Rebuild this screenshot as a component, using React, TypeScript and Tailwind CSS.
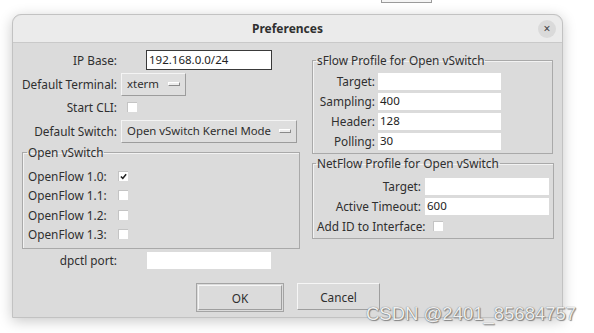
import React from 'react';

const ui = "font-['Noto_Sans',sans-serif] text-[11.8px] leading-[16px] text-[#2f2f2f]";

function Entry({ value = '', className = '' }: { value?: string; className?: string }) {
  return (
    <div className={`bg-white h-[17px] flex items-center px-[2px] text-[11.5px] text-[#222] ${className}`}>
      {value}
    </div>
  );
}

function Check({ checked = false }: { checked?: boolean }) {
  return (
    <div className="w-[10px] h-[10px] bg-white border-t border-l border-[#c4c4c4] flex items-center justify-center">
      {checked && (
        <svg width="7" height="7" viewBox="0 0 8 8">
          <path d="M1 4 L3.2 6.2 L7 1.5" stroke="#222" strokeWidth="1.8" fill="none" />
        </svg>
      )}
    </div>
  );
}

function MenuButton({ label, className = '' }: { label: string; className?: string }) {
  return (
    <div
      className={`h-[23px] flex items-center justify-between pl-[5px] pr-[5px] bg-[#dedede] border border-t-[#f4f4f4] border-l-[#f4f4f4] border-r-[#9c9c9c] border-b-[#9c9c9c] ${className}`}
    >
      <span className="whitespace-nowrap text-[11.4px]">{label}</span>
      <span className="w-[12px] h-[4px] bg-[#ececec] border-b border-r border-[#8a8a8a] border-t border-l border-t-white border-l-white" />
    </div>
  );
}

function Frame({ title, children, className = '' }: { title: string; children: React.ReactNode; className?: string }) {
  return (
    <fieldset className={`border border-[#a9a9a9] shadow-[inset_1px_1px_0_#f2f2f2] px-[4px] ${className}`}>
      <legend className="-ml-px px-[1px] h-[16px] whitespace-nowrap">{title}</legend>
      {children}
    </fieldset>
  );
}

function Row({ label, labelW, children, h = 'h-[20px]' }: { label: string; labelW: string; children: React.ReactNode; h?: string }) {
  return (
    <div className={`flex items-center ${h}`}>
      <div className={`${labelW} text-right pr-[2px] whitespace-nowrap`}>{label}</div>
      {children}
    </div>
  );
}

export default function App() {
  return (
    <div className={`relative w-[594px] h-[333px] bg-white overflow-hidden ${ui}`}>
      <div className="ml-[381px] w-[51px] h-[3px] border-x border-b border-[#9a9a9a] bg-[#f4f4f4]" />
      <div className="ml-[12px] mt-[11px] w-[551px] h-[304px] flex flex-col rounded-t-[9px] border border-[#c2c2c2] bg-[#dbdbdb] shadow-[0_3px_14px_rgba(0,0,0,0.22)]">
        {/* title bar */}
        <div className="h-[28px] shrink-0 grid grid-cols-[1fr_auto_1fr] items-center bg-[#ebebeb] rounded-t-[9px] border-b border-[#c9c9c9]">
          <div />
          <div className="font-bold text-[12px] text-[#303030]">Preferences</div>
          <div className="justify-self-end mr-[6px] w-[18px] h-[18px] rounded-full bg-[#dadada] flex items-center justify-center text-[#444] text-[12px] leading-none">
            ×
          </div>
        </div>

        <div className="flex pt-[5px] pl-[9px] gap-[12px]">
          {/* left column */}
          <div className="w-[278px] flex flex-col">
            <div className="grid grid-cols-[95px_176px] gap-x-[4px] items-center">
              <div className="h-[24px] flex items-center justify-end">IP Base:</div>
              <div className="flex justify-center">
                <div className="w-[126px] h-[20px] bg-white border border-[#3a3a3a] flex items-center px-[2px] text-[11.5px] text-[#222]">192.168.0.0/24</div>
              </div>
              <div className="h-[24px] flex items-center justify-end whitespace-nowrap">Default Terminal:</div>
              <MenuButton label="xterm" className="w-[65px]" />
              <div className="h-[22px] flex items-center justify-end">Start CLI:</div>
              <div className="pl-[6px]"><Check /></div>
              <div className="h-[26px] flex items-center justify-end whitespace-nowrap">Default Switch:</div>
              <MenuButton label="Open vSwitch Kernel Mode" className="w-[176px]" />
            </div>
            <Frame title="Open vSwitch" className="pt-[6px] pb-[4px] pl-[5px]">
              {['1.0', '1.1', '1.2', '1.3'].map((v, i) => (
                <div key={v} className="h-[19.5px] flex items-center">
                  <div className="w-[90px] whitespace-nowrap">OpenFlow {v}:</div>
                  <Check checked={i === 0} />
                </div>
              ))}
            </Frame>
            <div className="grid grid-cols-[95px_176px] gap-x-[4px] items-center h-[22px]">
              <div className="text-right">dpctl port:</div>
              <div className="flex justify-center">
                <Entry className="w-[124px]" />
              </div>
            </div>
          </div>

          {/* right column */}
          <div className="w-[241px] flex flex-col mt-[4px]">
            <Frame title="sFlow Profile for Open vSwitch" className="pt-[3px] pb-[2px]">
              <Row label="Target:" labelW="w-[60px]"><Entry className="w-[123px] ml-[1px]" /></Row>
              <Row label="Sampling:" labelW="w-[60px]"><Entry value="400" className="w-[123px] ml-[1px]" /></Row>
              <Row label="Header:" labelW="w-[60px]"><Entry value="128" className="w-[123px] ml-[1px]" /></Row>
              <Row label="Polling:" labelW="w-[60px]"><Entry value="30" className="w-[123px] ml-[1px]" /></Row>
            </Frame>
            <Frame title="NetFlow Profile for Open vSwitch" className="mt-[1px] pt-[5px] pb-[2px]">
              <Row label="Target:" labelW="w-[106px]"><Entry className="w-[124px] ml-[2px]" /></Row>
              <Row label="Active Timeout:" labelW="w-[106px]"><Entry value="600" className="w-[124px] ml-[2px]" /></Row>
              <Row label="Add ID to Interface:" labelW="w-[106px]">
                <div className="ml-[10px]"><Check /></div>
              </Row>
            </Frame>
          </div>
        </div>

        {/* buttons */}
        <div className="flex justify-center items-start gap-[13px] mt-[12px] pl-[1px]">
          <div className="w-[88px] h-[29px] border border-[#a4a4a4] p-[1px]">
            <div className="h-full flex items-center justify-center bg-[#dbdbdb] border border-t-[#f6f6f6] border-l-[#f6f6f6] border-r-[#9e9e9e] border-b-[#9e9e9e]">
              OK
            </div>
          </div>
          <div className="w-[83px] h-[27px] flex items-center justify-center bg-[#dbdbdb] border border-t-[#f6f6f6] border-l-[#f6f6f6] border-r-[#9e9e9e] border-b-[#9e9e9e]">
            Cancel
          </div>
        </div>
      </div>

      <div className="absolute left-[366px] top-[303px] font-['Liberation_Sans',Arial,sans-serif] text-[18.5px] leading-[22px] text-[#eeeeee] [text-shadow:0_0_1px_#555,1px_1px_1px_#888]">
        CSDN @2401_85684757
      </div>
    </div>
  );
}
